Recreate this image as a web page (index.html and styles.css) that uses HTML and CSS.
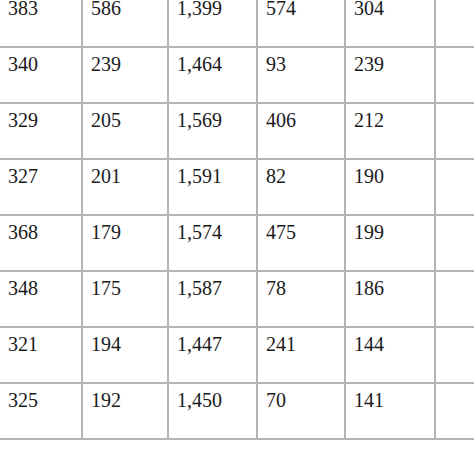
FILE: index.html
```html
<!DOCTYPE html>
<html>
<head>
<meta charset="utf-8">
<link rel="stylesheet" href="styles.css">
</head>
<body>
<div class="table">
  <div class="row"><div class="cell">383</div><div class="cell">586</div><div class="cell">1,399</div><div class="cell">574</div><div class="cell">304</div><div class="cell last"></div></div>
  <div class="row"><div class="cell">340</div><div class="cell">239</div><div class="cell">1,464</div><div class="cell">93</div><div class="cell">239</div><div class="cell last"></div></div>
  <div class="row"><div class="cell">329</div><div class="cell">205</div><div class="cell">1,569</div><div class="cell">406</div><div class="cell">212</div><div class="cell last"></div></div>
  <div class="row"><div class="cell">327</div><div class="cell">201</div><div class="cell">1,591</div><div class="cell">82</div><div class="cell">190</div><div class="cell last"></div></div>
  <div class="row"><div class="cell">368</div><div class="cell">179</div><div class="cell">1,574</div><div class="cell">475</div><div class="cell">199</div><div class="cell last"></div></div>
  <div class="row"><div class="cell">348</div><div class="cell">175</div><div class="cell">1,587</div><div class="cell">78</div><div class="cell">186</div><div class="cell last"></div></div>
  <div class="row"><div class="cell">321</div><div class="cell">194</div><div class="cell">1,447</div><div class="cell">241</div><div class="cell">144</div><div class="cell last"></div></div>
  <div class="row"><div class="cell">325</div><div class="cell">192</div><div class="cell">1,450</div><div class="cell">70</div><div class="cell">141</div><div class="cell last"></div></div>
</div>
</body>
</html>
```
FILE: styles.css
```css
html, body {
  margin: 0;
  padding: 0;
  background: #ffffff;
  overflow: hidden;
}
.table {
  margin-top: -8px;
  width: 474px;
  font-family: "Liberation Serif", "Times New Roman", serif;
  font-size: 20px;
  line-height: 22px;
  color: #1a1a1a;
}
.row {
  display: grid;
  grid-template-columns: 83px 86px 89px 88px 90px 1fr;
  height: 56px;
  box-sizing: border-box;
  border-bottom: 2px solid #b4b4b4;
}
.cell {
  box-sizing: border-box;
  padding: 5px 0 0 8px;
  border-right: 2px solid #b4b4b4;
}
.cell.last {
  border-right: none;
}
```
